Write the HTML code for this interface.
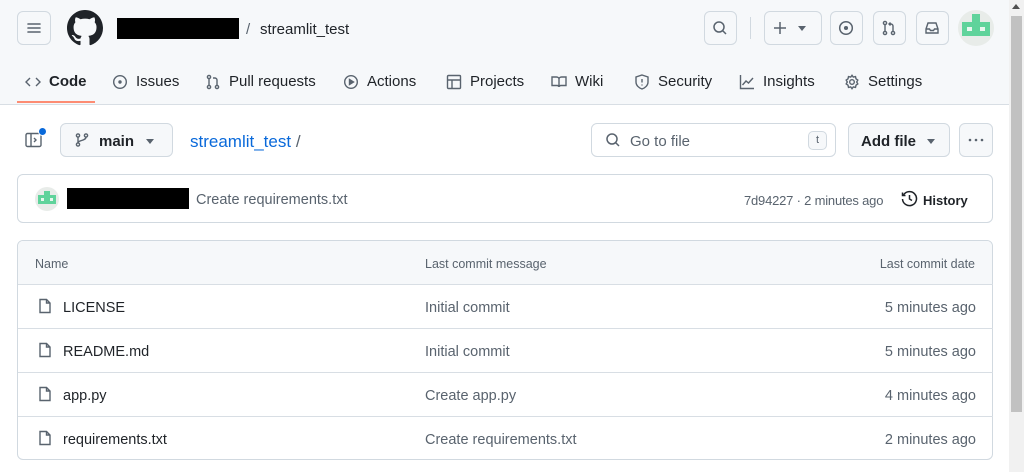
<!DOCTYPE html>
<html><head><meta charset="utf-8"><style>
*{box-sizing:border-box;margin:0;padding:0}
body{width:1024px;height:472px;overflow:hidden;background:#fff;font-family:"Liberation Sans",sans-serif;color:#1f2328;position:relative}
.a{position:absolute}
.btn{position:absolute;border:1px solid #d1d9e0;border-radius:6px;background:#f6f8fa}
.hdr{position:absolute;left:0;top:0;width:1010px;height:105px;background:#f6f8fa;border-bottom:1px solid #d8dee4}
.tab{position:absolute;top:73px;font-size:15px;color:#1f2328;display:flex;align-items:center;gap:8px}
.tab svg{width:16px;height:16px;fill:none;stroke:#59636e;stroke-width:1.4}
.row{position:absolute;left:18px;width:975px;height:44px;border-top:1px solid #d8dee4;font-size:14.5px}
.row span{position:absolute;top:15px}
.fi{position:absolute;left:19px;top:13px}
.muted{color:#59636e}
</style></head><body>
<div class="hdr"></div>
<div class="btn" style="left:17px;top:11px;width:34px;height:34px;background:#f6f8fa"></div>
<svg class="a" style="left:26px;top:20px" width="16" height="16"><path d="M2 4h12M2 8h12M2 12h12" stroke="#59636e" stroke-width="1.6" stroke-linecap="round"/></svg>
<svg class="a" style="left:67px;top:10px" width="36" height="36" viewBox="0 0 16 16"><path fill="#1f2328" d="M8 0C3.58 0 0 3.58 0 8c0 3.54 2.290 6.53 5.47 7.59.4.07.55-.17.55-.38 0-.19-.01-.82-.01-1.49-2.01.37-2.530-.49-2.69-.94-.09-.23-.48-.94-.82-1.13-.28-.15-.68-.52-.01-.53.63-.01 1.08.58 1.23.82.72 1.21 1.87.87 2.33.66.07-.52.28-.87.51-1.070-1.78-.2-3.64-.89-3.64-3.95 0-.87.31-1.59.82-2.15-.08-.2-.36-1.020.08-2.12 0 0 .67-.21 2.2.82.64-.18 1.32-.27 2-.27.68 0 1.36.09 2 .27 1.53-1.04 2.2-.82 2.2-.82.44 1.1.16 1.92.08 2.12.51.56.82 1.27.82 2.15 0 3.07-1.87 3.75-3.65 3.95.29.25.54.73.54 1.48 0 1.07-.01 1.93-.01 2.2 0 .21.15.46.55.38A8.013 8.013 0 0016 8c0-4.42-3.58-8-8-8z"/></svg>
<div class="a" style="left:117px;top:18px;width:122px;height:21px;background:#000"></div>
<div class="a" style="left:246px;top:21px;font-size:15px;color:#59636e">/</div>
<div class="a" style="left:260px;top:21px;font-size:15px;font-weight:500">streamlit_test</div>
<div class="btn" style="left:704px;top:11px;width:33px;height:34px"></div>
<svg class="a" style="left:712px;top:20px" width="16" height="16" fill="none" stroke="#59636e" stroke-width="1.5"><circle cx="7" cy="7" r="5"/><path d="M10.5 10.5L14 14"/></svg>
<div class="a" style="left:750px;top:17px;width:1px;height:22px;background:#d1d9e0"></div>
<div class="btn" style="left:764px;top:11px;width:58px;height:34px"></div>
<svg class="a" style="left:772px;top:20px" width="16" height="16" stroke="#59636e" stroke-width="1.5"><path d="M8 2v12M2 8h12"/></svg>
<svg class="a" style="left:798px;top:26px" width="8" height="5"><path d="M0 0h8L4 5z" fill="#59636e"/></svg>
<div class="btn" style="left:830px;top:11px;width:33px;height:34px"></div>
<svg class="a" style="left:838px;top:20px" width="16" height="16" fill="none" stroke="#59636e" stroke-width="1.5"><circle cx="8" cy="8" r="6.3"/><circle cx="8" cy="8" r="1.3" fill="#59636e"/></svg>
<div class="btn" style="left:873px;top:11px;width:33px;height:34px"></div>
<svg class="a" style="left:881px;top:20px" width="16" height="16" fill="none" stroke="#59636e" stroke-width="1.4"><circle cx="4" cy="3" r="1.6"/><circle cx="4" cy="13" r="1.6"/><circle cx="12" cy="13" r="1.6"/><path d="M4 5v6M12 11V6c0-1-1-2-2-2H8M9.5 2.5L8 4l1.5 1.5"/></svg>
<div class="btn" style="left:916px;top:11px;width:33px;height:34px"></div>
<svg class="a" style="left:924px;top:20px" width="16" height="16" fill="none" stroke="#59636e" stroke-width="1.4"><path d="M2 9l2-6h8l2 6v4H2z M2 9h3.5l1 1.5h3l1-1.5H14"/></svg>
<div class="a" style="left:958px;top:10px;width:36px;height:36px;border-radius:50%;background:#e8ece9;overflow:hidden">
<div class="a" style="left:4px;top:12px;width:28px;height:14px;background:#5fd39b"></div>
<div class="a" style="left:14px;top:4px;width:8px;height:8px;background:#5fd39b"></div>
<div class="a" style="left:9px;top:17px;width:5px;height:4px;background:#e8f7ef"></div>
<div class="a" style="left:22px;top:17px;width:5px;height:4px;background:#e8f7ef"></div>
</div>
<div class="tab" style="left:25px;font-weight:600"><svg viewBox="0 0 16 16"><path d="M5 4L1 8l4 4M11 4l4 4-4 4"/></svg>Code</div>
<div class="a" style="left:17px;top:101px;width:78px;height:2px;background:#fd8c73"></div>
<div class="tab" style="left:112px"><svg viewBox="0 0 16 16"><circle cx="8" cy="8" r="6.3"/><circle cx="8" cy="8" r="1" fill="#59636e"/></svg>Issues</div>
<div class="tab" style="left:205px"><svg viewBox="0 0 16 16"><circle cx="4" cy="3" r="1.6"/><circle cx="4" cy="13" r="1.6"/><circle cx="12" cy="13" r="1.6"/><path d="M4 5v6M12 11V6c0-1-1-2-2-2H8"/></svg>Pull requests</div>
<div class="tab" style="left:343px"><svg viewBox="0 0 16 16"><circle cx="8" cy="8" r="6.3"/><path d="M6.5 5.5v5l4-2.5z" fill="#59636e"/></svg>Actions</div>
<div class="tab" style="left:446px"><svg viewBox="0 0 16 16"><rect x="1.5" y="1.5" width="13" height="13" rx="1"/><path d="M1.5 6h13M6 6v8.5"/></svg>Projects</div>
<div class="tab" style="left:551px"><svg viewBox="0 0 16 16"><path d="M1 3h4.5c1.5 0 2.5 1 2.5 2v8c0-1-1-1.5-2-1.5H1zM15 3h-4.5C9 3 8 4 8 5v8c0-1 1-1.5 2-1.5h5z"/></svg>Wiki</div>
<div class="tab" style="left:634px"><svg viewBox="0 0 16 16"><path d="M8 1l6 2v5c0 3.5-3 6-6 7-3-1-6-3.5-6-7V3z"/><path d="M8 5v3.5M8 10.5v1"/></svg>Security</div>
<div class="tab" style="left:739px"><svg viewBox="0 0 16 16"><path d="M1.5 1v13.5H15M3.5 11l3.5-4 2.5 2 4.5-5"/></svg>Insights</div>
<div class="tab" style="left:844px"><svg viewBox="0 0 16 16"><circle cx="8" cy="8" r="2.3"/><path d="M8 1.3l1.3 1.8 2.2-.5.5 2.2 1.8 1.3-1.1 1.9 1.1 1.9-1.8 1.3-.5 2.2-2.2-.5L8 14.7l-1.3-1.8-2.2.5-.5-2.2-1.8-1.3L3.3 8 2.2 6.1 4 4.8l.5-2.2 2.2.5z"/></svg>Settings</div>
<svg class="a" style="left:25px;top:131px" width="20" height="18" fill="none" stroke="#59636e" stroke-width="1.4"><rect x="1" y="2.5" width="15" height="13" rx="1.5"/><path d="M6 2.5v13M9 7l2 2-2 2"/></svg>
<div class="a" style="left:38px;top:127px;width:9px;height:9px;border-radius:50%;background:#0969da;border:1.5px solid #fff"></div>
<div class="btn" style="left:60px;top:123px;width:113px;height:34px"></div>
<svg class="a" style="left:74px;top:132px" width="16" height="16" fill="none" stroke="#59636e" stroke-width="1.4"><circle cx="4" cy="3.5" r="1.6"/><circle cx="12" cy="3.5" r="1.6"/><circle cx="4" cy="12.5" r="1.6"/><path d="M4 5v6M12 5c0 4-8 3-8 6"/></svg>
<div class="a" style="left:99px;top:133px;font-size:15px;font-weight:600">main</div>
<svg class="a" style="left:146px;top:139px" width="8" height="5"><path d="M0 0h8L4 5z" fill="#59636e"/></svg>
<div class="a" style="left:190px;top:132px;font-size:17px;color:#0969da;font-weight:500">streamlit_test <span style="color:#59636e;font-weight:400">/</span></div>
<div class="a" style="left:591px;top:123px;width:245px;height:34px;border:1px solid #d1d9e0;border-radius:6px;background:#fff"></div>
<svg class="a" style="left:605px;top:132px" width="16" height="16" fill="none" stroke="#59636e" stroke-width="1.5"><circle cx="7" cy="7" r="5"/><path d="M10.5 10.5L14 14"/></svg>
<div class="a" style="left:630px;top:133px;font-size:15px;color:#59636e">Go to file</div>
<div class="a" style="left:808px;top:131px;width:19px;height:19px;border:1px solid #d1d9e0;border-radius:5px;font-size:11px;color:#59636e;text-align:center;line-height:17px;background:#f6f8fa">t</div>
<div class="btn" style="left:848px;top:123px;width:102px;height:34px"></div>
<div class="a" style="left:861px;top:133px;font-size:15px;font-weight:600">Add file</div>
<svg class="a" style="left:927px;top:139px" width="8" height="5"><path d="M0 0h8L4 5z" fill="#59636e"/></svg>
<div class="btn" style="left:959px;top:123px;width:34px;height:34px"></div>
<svg class="a" style="left:966px;top:138px" width="20" height="4"><circle cx="4" cy="2" r="1.3" fill="#59636e"/><circle cx="10" cy="2" r="1.3" fill="#59636e"/><circle cx="16" cy="2" r="1.3" fill="#59636e"/></svg>
<div class="a" style="left:17px;top:174px;width:976px;height:49px;border:1px solid #d1d9e0;border-radius:6px"></div>
<div class="a" style="left:35px;top:187px;width:24px;height:24px;border-radius:50%;background:#e8ece9;overflow:hidden">
<div class="a" style="left:3px;top:8px;width:18px;height:9px;background:#5fd39b"></div>
<div class="a" style="left:9px;top:4px;width:6px;height:5px;background:#5fd39b"></div>
<div class="a" style="left:6px;top:11px;width:3px;height:3px;background:#e8f7ef"></div>
<div class="a" style="left:15px;top:11px;width:3px;height:3px;background:#e8f7ef"></div>
</div>
<div class="a" style="left:67px;top:188px;width:122px;height:21px;background:#000"></div>
<div class="a" style="left:196px;top:192px;font-size:14.5px;color:#59636e">Create requirements.txt</div>
<div class="a" style="left:744px;top:193px;font-size:13px;color:#59636e;letter-spacing:-0.2px">7d94227 · 2 minutes ago</div>
<svg class="a" style="left:901px;top:190px" width="17" height="17" fill="none" stroke="#1f2328" stroke-width="1.5"><path d="M2.5 5A7 7 0 1 1 1.5 9"/><path d="M1.5 2.5V5.5H4.5M8.5 5v4l2.5 1.5"/></svg>
<div class="a" style="left:923px;top:193px;font-size:13px;font-weight:600">History</div>
<div class="a" style="left:17px;top:240px;width:976px;height:220px;border:1px solid #d1d9e0;border-radius:6px;overflow:hidden">
<div style="height:44px;background:#f6f8fa;font-size:12.5px;color:#59636e;position:relative">
<span class="a" style="left:17px;top:16px">Name</span><span class="a" style="left:407px;top:16px">Last commit message</span><span class="a" style="right:17px;top:16px">Last commit date</span></div>
</div>
<div class="row" style="top:284px"><svg class="fi" width="16" height="16" fill="none" stroke="#59636e" stroke-width="1.4"><path d="M3 1.5h6.5l3.5 3.5v9.5H3z M9.5 1.5V5H13"/></svg><span style="left:45px">LICENSE</span><span class="muted" style="left:407px">Initial commit</span><span class="muted" style="right:17px">5 minutes ago</span></div>
<div class="row" style="top:328px"><svg class="fi" width="16" height="16" fill="none" stroke="#59636e" stroke-width="1.4"><path d="M3 1.5h6.5l3.5 3.5v9.5H3z M9.5 1.5V5H13"/></svg><span style="left:45px">README.md</span><span class="muted" style="left:407px">Initial commit</span><span class="muted" style="right:17px">5 minutes ago</span></div>
<div class="row" style="top:372px"><svg class="fi" width="16" height="16" fill="none" stroke="#59636e" stroke-width="1.4"><path d="M3 1.5h6.5l3.5 3.5v9.5H3z M9.5 1.5V5H13"/></svg><span style="left:45px">app.py</span><span class="muted" style="left:407px">Create app.py</span><span class="muted" style="right:17px">4 minutes ago</span></div>
<div class="row" style="top:416px"><svg class="fi" width="16" height="16" fill="none" stroke="#59636e" stroke-width="1.4"><path d="M3 1.5h6.5l3.5 3.5v9.5H3z M9.5 1.5V5H13"/></svg><span style="left:45px">requirements.txt</span><span class="muted" style="left:407px">Create requirements.txt</span><span class="muted" style="right:17px">2 minutes ago</span></div>
<div class="a" style="left:1009px;top:0;width:15px;height:472px;background:#f1f1f1"></div>
<div class="a" style="left:1011px;top:16px;width:11px;height:396px;background:#c1c1c1"></div>
<svg class="a" style="left:1012px;top:4px" width="8" height="5"><path d="M0 5h8L4 0z" fill="#505050"/></svg>
</body></html>
